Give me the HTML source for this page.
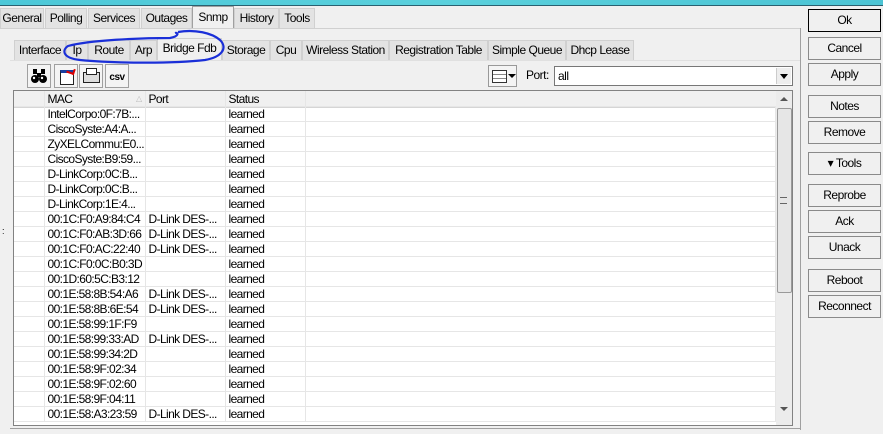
<!DOCTYPE html><html><head><style>
body{margin:0;width:883px;height:434px;background:#f0f0f0;font-family:"Liberation Sans",sans-serif;font-size:12px;position:relative;overflow:hidden;color:#000;letter-spacing:-0.5px}
.a{position:absolute}
.tab{position:absolute;height:19px;background:#e3e3e3;border:1px solid #d0d0d0;border-bottom:none;text-align:center;line-height:19px;font-size:12px;letter-spacing:-0.5px;white-space:nowrap;overflow:hidden}
.sel{background:#f0f0f0}
.btn{position:absolute;left:808px;width:71px;height:21px;border:1px solid #8a8a8a;background:#f0f0f0;text-align:center;line-height:21px;font-size:12px;letter-spacing:-0.5px}
.ib{position:absolute;top:64px;width:22px;height:22px;border:1px solid #a0a0a0;background:#f4f4f4}
table{border-collapse:collapse;font-size:12px;letter-spacing:-0.6px;table-layout:fixed}
td{height:14px;border-bottom:1px solid #e6e6e6;border-right:1px solid #e6e6e6;padding:0 0 0 3px;white-space:nowrap;overflow:hidden;line-height:14px}
</style></head><body>
<div class="a" style="left:0;top:0;width:883px;height:5px;background:linear-gradient(90deg,#4cc8d8,#5ad0dc 50%,#4cc4d4)"></div>
<div class="a" style="left:0;top:5px;width:883px;height:1px;background:#2a6070"></div>
<div class="tab" style="left:0;top:8px;width:42px">General</div>
<div class="tab" style="left:45px;top:8px;width:40px">Polling</div>
<div class="tab" style="left:88px;top:8px;width:50px">Services</div>
<div class="tab" style="left:141px;top:8px;width:49px">Outages</div>
<div class="tab sel" style="left:192px;top:6px;height:22px;width:40px;line-height:20px;border-color:#a0a0a0">Snmp</div>
<div class="tab" style="left:234px;top:8px;width:43px">History</div>
<div class="tab" style="left:279px;top:8px;width:34px">Tools</div>
<div class="a" style="left:0;top:28px;width:800px;height:1px;background:#d0d0d0"></div>
<div class="a" style="left:800px;top:28px;width:1px;height:402px;background:#a0a0a0"></div>
<div class="tab" style="left:14px;top:40px;width:50px">Interface</div>
<div class="tab" style="left:66px;top:40px;width:20px">Ip</div>
<div class="tab" style="left:88px;top:40px;width:40px">Route</div>
<div class="tab" style="left:130px;top:40px;width:25px">Arp</div>
<div class="tab sel" style="left:157px;top:38px;height:21px;width:63px;line-height:19px">Bridge Fdb</div>
<div class="tab" style="left:222px;top:40px;width:46px">Storage</div>
<div class="tab" style="left:270px;top:40px;width:30px">Cpu</div>
<div class="tab" style="left:302px;top:40px;width:85px">Wireless Station</div>
<div class="tab" style="left:389px;top:40px;width:97px">Registration Table</div>
<div class="tab" style="left:488px;top:40px;width:76px">Simple Queue</div>
<div class="tab" style="left:566px;top:40px;width:66px">Dhcp Lease</div>
<div class="a" style="left:10px;top:60px;width:790px;height:1px;background:#e0e0e0"></div>
<div class="ib" style="left:27px"><svg width="22" height="22"><rect x="5" y="4" width="4" height="5" fill="#000"/><rect x="13" y="4" width="4" height="5" fill="#000"/><rect x="9" y="8" width="4" height="4" fill="#000"/><circle cx="7" cy="14" r="4" fill="#000"/><circle cx="15" cy="14" r="4" fill="#000"/><circle cx="6" cy="13" r="1.2" fill="#fff"/><circle cx="14" cy="13" r="1.2" fill="#fff"/></svg></div>
<div class="ib" style="left:54px"><div class="a" style="left:5px;top:5px;width:12px;height:11px;border:1px solid #222;border-top:3px solid #1a3fa0;background:#fff"></div><div class="a" style="left:12px;top:3px;width:6px;height:4px;border-bottom:2px solid #d00;border-right:2px solid #d00;transform:rotate(20deg)"></div></div>
<div class="ib" style="left:79px"><div class="a" style="left:3px;top:7px;width:15px;height:9px;border:1px solid #222;background:#ddd"></div><div class="a" style="left:6px;top:3px;width:9px;height:5px;border:1px solid #222;background:#fff"></div></div>
<div class="ib" style="left:105px;font-weight:bold;font-size:10px;line-height:26px;text-align:center">csv</div>
<div class="a" style="left:488px;top:65px;width:27px;height:20px;border:1px solid #999;background:#f4f4f4"><div class="a" style="left:3px;top:4px;width:13px;height:11px;border:1px solid #333;background:repeating-linear-gradient(#fff 0 3px,#888 3px 4px)"></div><div class="a" style="left:19px;top:8px;border:4px solid transparent;border-top:4px solid #000"></div></div>
<div class="a" style="left:526px;top:68px">Port:</div>
<div class="a" style="left:554px;top:66px;width:237px;height:18px;border:1px solid #777;background:#fff"><span class="a" style="left:3px;top:2px">all</span><div class="a" style="right:1px;top:1px;width:14px;height:16px;background:#eee;border-left:1px solid #ccc"><div class="a" style="left:3px;top:6px;border:4px solid transparent;border-top:5px solid #000"></div></div></div>
<div class="a" style="left:13px;top:90px;width:778px;height:334px;border:1px solid #828282;background:#fff;overflow:hidden">
<div class="a" style="left:0;top:0;width:762px;height:16px;background:#f0f0f0;border-bottom:1px solid #d5d5d5"></div>
<table class="a" style="left:0;top:0;width:762px">
<colgroup><col style="width:30px"><col style="width:101px"><col style="width:80px"><col style="width:80px"><col></colgroup>
<tr style="background:#f0f0f0"><td style="height:15px"></td><td>MAC <span style="color:#bbb;font-size:8px;float:right;padding-right:3px">△</span></td><td>Port</td><td>Status</td><td style="border-right:none"></td></tr>
<tr><td></td><td>IntelCorpo:0F:7B:...</td><td></td><td>learned</td><td></td></tr>
<tr><td></td><td>CiscoSyste:A4:A...</td><td></td><td>learned</td><td></td></tr>
<tr><td></td><td>ZyXELCommu:E0...</td><td></td><td>learned</td><td></td></tr>
<tr><td></td><td>CiscoSyste:B9:59...</td><td></td><td>learned</td><td></td></tr>
<tr><td></td><td>D-LinkCorp:0C:B...</td><td></td><td>learned</td><td></td></tr>
<tr><td></td><td>D-LinkCorp:0C:B...</td><td></td><td>learned</td><td></td></tr>
<tr><td></td><td>D-LinkCorp:1E:4...</td><td></td><td>learned</td><td></td></tr>
<tr><td></td><td>00:1C:F0:A9:84:C4</td><td>D-Link DES-...</td><td>learned</td><td></td></tr>
<tr><td></td><td>00:1C:F0:AB:3D:66</td><td>D-Link DES-...</td><td>learned</td><td></td></tr>
<tr><td></td><td>00:1C:F0:AC:22:40</td><td>D-Link DES-...</td><td>learned</td><td></td></tr>
<tr><td></td><td>00:1C:F0:0C:B0:3D</td><td></td><td>learned</td><td></td></tr>
<tr><td></td><td>00:1D:60:5C:B3:12</td><td></td><td>learned</td><td></td></tr>
<tr><td></td><td>00:1E:58:8B:54:A6</td><td>D-Link DES-...</td><td>learned</td><td></td></tr>
<tr><td></td><td>00:1E:58:8B:6E:54</td><td>D-Link DES-...</td><td>learned</td><td></td></tr>
<tr><td></td><td>00:1E:58:99:1F:F9</td><td></td><td>learned</td><td></td></tr>
<tr><td></td><td>00:1E:58:99:33:AD</td><td>D-Link DES-...</td><td>learned</td><td></td></tr>
<tr><td></td><td>00:1E:58:99:34:2D</td><td></td><td>learned</td><td></td></tr>
<tr><td></td><td>00:1E:58:9F:02:34</td><td></td><td>learned</td><td></td></tr>
<tr><td></td><td>00:1E:58:9F:02:60</td><td></td><td>learned</td><td></td></tr>
<tr><td></td><td>00:1E:58:9F:04:11</td><td></td><td>learned</td><td></td></tr>
<tr><td></td><td>00:1E:58:A3:23:59</td><td>D-Link DES-...</td><td>learned</td><td></td></tr>
</table>
<div class="a" style="left:762px;top:0;width:16px;height:334px;background:#ececec"><div class="a" style="left:4px;top:6px;border:4px solid transparent;border-bottom:4px solid #555;border-top:none"></div><div class="a" style="left:1px;top:17px;width:13px;height:183px;background:#e6e6e6;border:1px solid #9a9a9a;border-radius:2px"></div><div class="a" style="left:4px;top:106px;width:7px;height:5px;border-top:1px solid #666;border-bottom:1px solid #666"></div><div class="a" style="left:4px;top:316px;border:4px solid transparent;border-top:4px solid #555"></div></div>
</div>
<div class="a" style="left:10px;top:428px;width:790px;height:1px;background:#a0a0a0"></div>
<div class="a" style="left:2px;top:226px;font-size:9px">:</div>
<div class="btn" style="top:9px;border-color:#000">Ok</div>
<div class="btn" style="top:37px">Cancel</div>
<div class="btn" style="top:63px">Apply</div>
<div class="btn" style="top:95px">Notes</div>
<div class="btn" style="top:121px">Remove</div>
<div class="btn" style="top:152px">▾ Tools</div>
<div class="btn" style="top:184px">Reprobe</div>
<div class="btn" style="top:210px">Ack</div>
<div class="btn" style="top:236px">Unack</div>
<div class="btn" style="top:269px">Reboot</div>
<div class="btn" style="top:295px">Reconnect</div>
<svg class="a" style="left:0;top:0" width="883" height="434"><path d="M178 32 C195 29 212 33 220 40 C228 48 222 57 205 60 C170 64 110 63 80 60 C62 58 62 50 68 46 C90 40 140 38 170 38 C180 36 178 32 175 33" fill="none" stroke="#1a2fd8" stroke-width="2.2"/></svg>
</body></html>
